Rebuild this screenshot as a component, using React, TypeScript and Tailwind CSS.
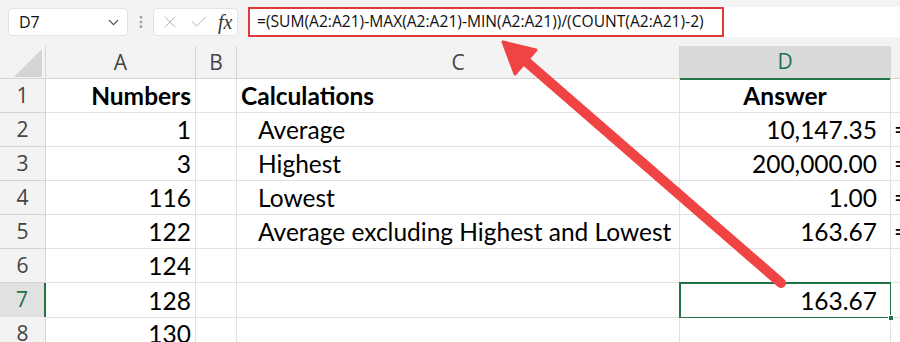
import { ChevronDown, X, Check, EllipsisVertical } from 'lucide-react'

const rows: { n: number; a: string; c?: string; d?: string; bold?: boolean; indent?: boolean; e?: boolean }[] = [
  { n: 1, a: 'Numbers', c: 'Calculations', d: 'Answer', bold: true },
  { n: 2, a: '1', c: 'Average', d: '10,147.35', indent: true, e: true },
  { n: 3, a: '3', c: 'Highest', d: '200,000.00', indent: true, e: true },
  { n: 4, a: '116', c: 'Lowest', d: '1.00', indent: true, e: true },
  { n: 5, a: '122', c: 'Average excluding Highest and Lowest', d: '163.67', indent: true, e: true },
  { n: 6, a: '124' },
  { n: 7, a: '128', d: '163.67' },
  { n: 8, a: '130' },
]

const cellFont = "font-['Lato','Open_Sans',sans-serif] text-[24.5px] leading-[30px] text-black"
const headFont = "font-['Open_Sans','Noto_Sans',sans-serif] text-[21px] text-[#444]"

function FormulaBar() {
  return (
    <div className="h-[46px] bg-[#f3f3f3] flex items-start pt-[8px] pl-[8px] font-['Open_Sans',sans-serif]">
      <div className="w-[120px] h-[28px] bg-white border border-[#e3e3e3] rounded-[4px] flex items-center justify-between pl-[10px] pr-[5px]">
        <span className="text-[16px] text-[#111]">D7</span>
        <ChevronDown size={17} strokeWidth={1.6} className="text-[#444]" />
      </div>
      <div className="w-[25px] h-[28px] flex items-center justify-center">
        <EllipsisVertical size={16} strokeWidth={2} className="text-[#999]" />
      </div>
      <div className="w-[85px] h-[28px] bg-white border border-[#e3e3e3] rounded-[4px] flex items-center gap-[9px] pl-[6px]">
        <X size={20} strokeWidth={1.2} className="text-[#b5b5b5]" />
        <Check size={20} strokeWidth={1.2} className="text-[#b5b5b5]" />
        <span className="font-['Liberation_Serif',serif] italic text-[20px] text-[#333] leading-none">fx</span>
      </div>
      <div className="ml-[10px] flex-1 h-[30px] -mt-[1px] bg-white flex items-center">
        <div className="w-[476px] h-full border-2 border-[#e23a3c] flex items-center pl-[7px] text-[15.6px] text-[#111] whitespace-nowrap">
          =(SUM(A2:A21)-MAX(A2:A21)-MIN(A2:A21))/(COUNT(A2:A21)-2)
        </div>
      </div>
    </div>
  )
}

export default function App() {
  const cols = 'grid grid-cols-[46px_150px_41px_443px_211px_1fr]'
  return (
    <div className="relative w-[900px] h-[342px] overflow-hidden bg-white">
      <FormulaBar />
      <div className={`${cols} h-[33px] bg-[#f3f3f3] border-b border-[#d4d4d4] ${headFont}`}>
        <div className="border-r border-[#d4d4d4] flex items-end justify-end pr-[3px] pb-[2px]">
          <svg width="28" height="28" viewBox="0 0 28 28">
            <polygon points="28,0 28,28 0,28" fill="#d4d4d4" />
          </svg>
        </div>
        <div className="border-r border-[#d4d4d4] flex items-center justify-center">A</div>
        <div className="border-r border-[#d4d4d4] flex items-center justify-center">B</div>
        <div className="border-r border-[#d4d4d4] flex items-center justify-center">C</div>
        <div className="border-r border-[#d4d4d4] bg-[#dadada] flex items-center justify-center text-[#217346] border-b-2 border-b-[#217346] -mb-[1px]">D</div>
        <div />
      </div>
      {rows.map((r) => {
        const sel = r.n === 7
        return (
          <div key={r.n} className={`${cols} h-[34px]`}>
            <div
              className={`${headFont} flex items-center justify-center border-b border-[#d4d4d4] ${
                sel ? 'bg-[#e1e1e1] text-[#217346] border-r-2 border-r-[#217346]' : 'bg-[#f3f3f3] border-r border-r-[#d4d4d4]'
              }`}
            >
              {r.n}
            </div>
            <div className={`${cellFont} border-r border-b border-[#e1e1e1] flex items-end justify-end pr-[4px] pb-[1px] ${r.bold ? 'font-bold' : ''}`}>
              {r.a}
            </div>
            <div className="border-r border-b border-[#e1e1e1]" />
            <div
              className={`${cellFont} border-r border-b border-[#e1e1e1] flex items-end pb-[1px] whitespace-nowrap ${
                r.indent ? 'pl-[21px]' : 'pl-[4px]'
              } ${r.bold ? 'font-bold' : ''}`}
            >
              {r.c}
            </div>
            <div
              className={`${cellFont} border-r border-b flex items-end pb-[1px] whitespace-nowrap ${
                sel ? 'relative border-2 border-[#217346] -ml-[1px] -mt-[1px] h-[36px] pr-[12px] justify-end' : 'border-[#e1e1e1]'
              } ${r.bold ? 'font-bold justify-center' : 'justify-end pr-[13px]'}`}
            >
              {r.d}
              {sel && <span className="absolute -right-[4px] -bottom-[4px] w-[6px] h-[6px] bg-[#217346] border border-white" />}
            </div>
            <div className={`${cellFont} border-b border-[#e1e1e1] flex items-end pb-[1px] pl-[3px]`}>{r.e ? '=' : ''}</div>
          </div>
        )
      })}
      <svg className="absolute inset-0 pointer-events-none" width="900" height="342" viewBox="0 0 900 342">
        <line x1="781" y1="283" x2="522" y2="58" stroke="#f04444" strokeWidth="10" strokeLinecap="round" />
        <polygon points="503,42 536,50 515,74" fill="#f04444" stroke="#f04444" strokeWidth="3" strokeLinejoin="round" />
      </svg>
    </div>
  )
}
